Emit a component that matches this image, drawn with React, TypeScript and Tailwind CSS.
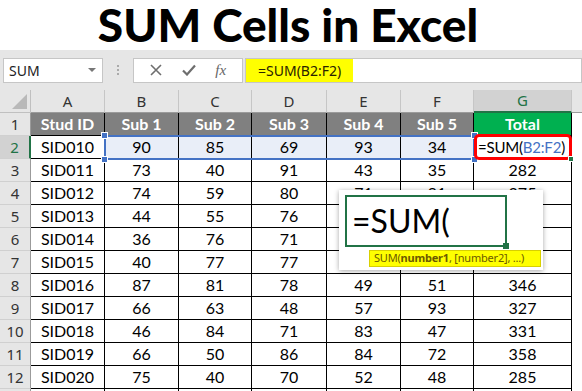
import React from 'react';

const GRID = 'grid grid-cols-[31px_74px_74px_73px_75px_74px_73px_98px_1fr] auto-rows-[23px]';
const UI = "font-['Noto_Sans','Open_Sans',sans-serif]";
const CELL = "font-['Lato','Liberation_Sans',sans-serif]";

const letters = ['A', 'B', 'C', 'D', 'E', 'F', 'G'];
const heads = ['Stud ID', 'Sub 1', 'Sub 2', 'Sub 3', 'Sub 4', 'Sub 5'];

const data: (string | number)[][] = [
  ['SID010', 90, 85, 69, 93, 34, ''],
  ['SID011', 73, 40, 91, 43, 35, 282],
  ['SID012', 74, 59, 80, 71, 91, 375],
  ['SID013', 44, 55, 76, 62, 58, 295],
  ['SID014', 36, 76, 71, 45, 67, 295],
  ['SID015', 40, 77, 77, 88, 60, 342],
  ['SID016', 87, 81, 78, 49, 51, 346],
  ['SID017', 66, 63, 48, 57, 93, 327],
  ['SID018', 46, 84, 71, 83, 47, 331],
  ['SID019', 66, 50, 86, 84, 72, 358],
  ['SID020', 75, 40, 70, 52, 48, 285],
  ['', '', '', '', '', '', ''],
];

function FormulaBar() {
  return (
    <div className={`flex h-[40px] items-center bg-[#e6e6e6] ${UI}`}>
      <div className="ml-[3px] flex h-[25px] w-[100px] items-center justify-between border border-[#c6c6c6] bg-white pl-[5px] pr-[6px]">
        <span className="text-[14px] text-[#222]">SUM</span>
        <span className="h-0 w-0 border-x-[4px] border-t-[4px] border-x-transparent border-t-[#777]" />
      </div>
      <div className="ml-[14px] flex flex-col gap-[2px]">
        <span className="h-[2px] w-[2px] bg-[#aaa]" />
        <span className="h-[2px] w-[2px] bg-[#aaa]" />
        <span className="h-[2px] w-[2px] bg-[#aaa]" />
      </div>
      <div className="ml-[14px] flex h-[25px] w-[110px] items-center justify-around border border-[#c6c6c6] bg-white px-[6px]">
        <svg width="12" height="12" viewBox="0 0 12 12">
          <path d="M1 1L11 11M11 1L1 11" stroke="#6e6e6e" strokeWidth="1.6" />
        </svg>
        <svg width="14" height="12" viewBox="0 0 14 12">
          <path d="M1 6.5L5 10.5L13 1.5" stroke="#6e6e6e" strokeWidth="2.2" fill="none" />
        </svg>
        <span className="font-['Liberation_Serif',serif] text-[15px] italic text-[#666]">fx</span>
      </div>
      <div className="ml-[2px] flex h-[25px] flex-1 items-stretch border border-[#c6c6c6] bg-white">
        <div className="flex w-[107px] items-center bg-[#ffff00] pl-[12px] text-[14px] text-[#2a2300]">=SUM(B2:F2)</div>
      </div>
    </div>
  );
}

function Sheet() {
  return (
    <div className={`relative ${GRID}`}>
      {/* column headers */}
      <div className="flex items-end justify-end border-r border-b border-[#c0c0c0] bg-[#e6e6e6] p-[3px]">
        <svg width="15" height="15" viewBox="0 0 15 15">
          <path d="M15 0L15 15L0 15Z" fill="#b9b9b9" />
        </svg>
      </div>
      {letters.map((l) => (
        <div
          key={l}
          className={`flex items-center justify-center border-r border-[#c6c6c6] ${UI} text-[15px] ${
            l === 'G' ? 'border-b-2 border-b-[#217346] bg-[#d2d2d2] text-[#217346]' : 'border-b border-b-[#9b9b9b] bg-[#e6e6e6] text-[#333]'
          }`}
        >
          {l}
        </div>
      ))}
      <div className="border-b border-[#9b9b9b] bg-[#e6e6e6]" />

      {/* row 1 */}
      <div className={`flex items-center justify-center border-r border-b border-r-[#9b9b9b] border-b-[#d0d0d0] bg-[#e6e6e6] ${UI} text-[15px] text-[#333]`}>1</div>
      {heads.map((h) => (
        <div key={h} className={`flex items-center justify-center border-r border-b border-black bg-[#808080] ${CELL} text-[16px] font-bold text-white`}>
          {h}
        </div>
      ))}
      <div className={`flex items-center justify-center border-r border-b border-black bg-[#00b050] ${CELL} text-[16px] font-bold text-white`}>Total</div>
      <div />

      {data.map((r, i) => {
        const n = i + 2;
        return (
          <React.Fragment key={n}>
            <div
              className={`flex items-center justify-center border-b border-b-[#d0d0d0] ${UI} text-[15px] ${
                n === 2 ? 'border-r-2 border-r-[#217346] bg-[#d2d2d2] text-[#217346]' : 'border-r border-r-[#9b9b9b] bg-[#e6e6e6] text-[#333]'
              }`}
            >
              {n < 13 ? n : ''}
            </div>
            {r.map((v, j) => (
              <div
                key={j}
                className={`flex items-center justify-center border-r border-b border-black ${CELL} text-[16px] text-black ${
                  n === 2 && j >= 1 && j <= 5 ? 'bg-[#e9eef8]' : 'bg-white'
                }`}
              >
                {n === 2 && j === 6 ? null : v}
              </div>
            ))}
            <div />
          </React.Fragment>
        );
      })}

      {/* range highlight B2:F2 */}
      <div className="absolute left-[104px] top-[45px] h-[25px] w-[371px] border-2 border-[#4472c4]" />
      {[
        [101, 42],
        [101, 66],
        [471, 42],
        [471, 66],
      ].map(([x, y]) => (
        <span key={`${x}-${y}`} className="absolute h-[7px] w-[7px] border border-white bg-[#4472c4]" style={{ left: x, top: y }} />
      ))}

      {/* active cell G2 */}
      <div className={`absolute left-[474px] top-[44px] flex h-[26px] w-[98px] items-center whitespace-nowrap rounded-[5px] border-[3px] border-[#ff0000] pl-[1px] ${CELL} text-[15px] tracking-[-0.2px] text-black`}>
        =SUM(<span className="text-[#4472c4]">B2:F2</span>)
      </div>
      <span className="absolute left-[568px] top-[66px] h-[6px] w-[6px] border border-white bg-[#217346]" />

      {/* zoomed formula popup */}
      <div className="absolute left-[339px] top-[100px] h-[80px] w-[204px] bg-white shadow-[0_1px_5px_rgba(0,0,0,0.35)]">
        <div className={`absolute left-[6px] top-[5px] flex h-[52px] w-[162px] items-center border-2 border-[#217346] pl-[5px] ${CELL} text-[32px] text-black`}>
          =SUM(
        </div>
        <span className="absolute left-[164px] top-[53px] h-[6px] w-[6px] bg-[#217346]" />
        <div className={`absolute left-[30px] top-[60px] flex h-[17px] w-[172px] items-center whitespace-nowrap border border-[#d8d000] bg-[#ffff00] pl-[4px] ${UI} text-[11px] tracking-[-0.2px] text-[#6b5800]`}>
          SUM(<b>number1</b>, [number2], ...)
        </div>
      </div>
    </div>
  );
}

export default function App() {
  return (
    <div className="h-[391px] w-[582px] overflow-hidden bg-white">
      <div className="flex h-[50px] items-center justify-center pr-[6px] font-['Lato','Liberation_Sans',sans-serif] text-[46px] font-black leading-[50px] text-black">
        SUM Cells in Excel
      </div>
      <FormulaBar />
      <Sheet />
    </div>
  );
}
